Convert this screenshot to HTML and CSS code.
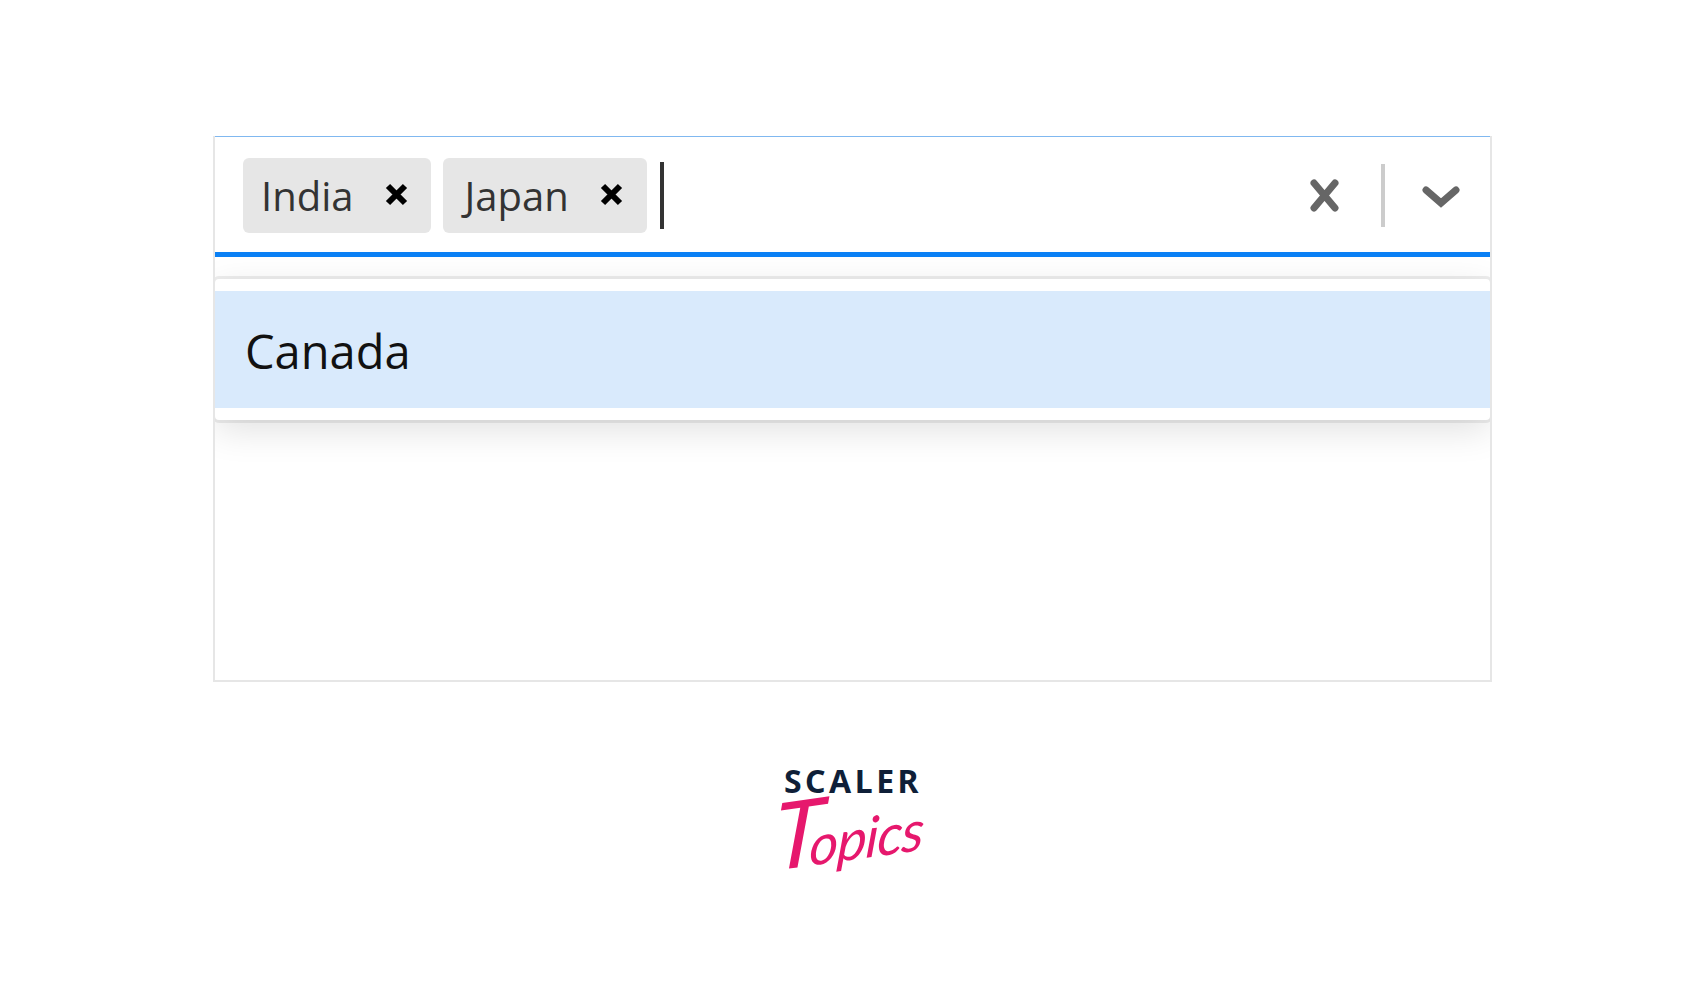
FILE: index.html
```html
<!DOCTYPE html>
<html lang="en">
<head>
<meta charset="UTF-8">
<meta name="viewport" content="width=device-width, initial-scale=1.0">
<title>Multi Select</title>
<link rel="stylesheet" href="styles.css">
</head>
<body>
<div class="frame">
  <div class="select">
    <div class="chip">
      <span class="chip-label">India</span>
      <svg class="chip-remove" viewBox="0 0 23 23"><path d="M3 3 L20 20 M20 3 L3 20"/></svg>
    </div>
    <div class="chip chip-wide">
      <span class="chip-label">Japan</span>
      <svg class="chip-remove" viewBox="0 0 23 23"><path d="M3 3 L20 20 M20 3 L3 20"/></svg>
    </div>
    <div class="caret"></div>
    <svg class="clear" viewBox="0 0 29 33"><path d="M4 4 L25 29 M25 4 L4 29"/></svg>
    <div class="separator"></div>
    <svg class="chevron" viewBox="0 0 38 22"><path d="M4 4 L19 17 L34 4"/></svg>
  </div>
  <div class="menu">
    <div class="option">Canada</div>
  </div>
</div>
<div class="logo">
  <span class="logo-top">SCALER</span>
  <span class="logo-script"><span class="logo-cap">T</span>opics</span>
</div>
</body>
</html>
```

FILE: styles.css
```css
html, body {
  margin: 0;
  background-color: #fff;
  font-family: "Open Sans", "Noto Sans", sans-serif;
}
.frame {
  box-sizing: border-box;
  height: 546px;
  margin: 136px 214px 0 213px;
  border: 2px solid #e6e6e6;
  border-top: none;
  overflow: hidden;
}
.select {
  box-sizing: border-box;
  height: 121px;
  display: flex;
  align-items: center;
  padding: 2px 0 0 28px;
  background-color: #fff;
  border-top: 1px solid #80b8f0;
  border-bottom: 5px solid #0a80f5;
  position: relative;
  z-index: 1;
}
.chip {
  box-sizing: border-box;
  height: 75px;
  display: flex;
  align-items: center;
  margin-right: 12px;
  padding: 0 23px 0 18px;
  background-color: #e6e6e6;
  border-radius: 6px;
}
.chip-wide {
  padding-left: 22px;
  padding-right: 24px;
}
.chip-label {
  font-size: 40px;
  color: #333;
  margin-right: 31px;
}
.chip-remove {
  width: 23px;
  height: 23px;
  margin-top: -2px;
}
.chip-remove path {
  fill: none;
  stroke: #000;
  stroke-width: 6;
}
.caret {
  width: 4px;
  height: 67px;
  margin-left: 1px;
  background-color: #333;
}
.clear {
  width: 29px;
  height: 33px;
  margin-left: auto;
  margin-right: 42px;
  margin-top: -1px;
}
.clear path {
  fill: none;
  stroke: #666;
  stroke-width: 7;
  stroke-linecap: round;
}
.separator {
  width: 4px;
  height: 63px;
  background-color: #ccc;
  margin-right: 37px;
}
.chevron {
  width: 38px;
  height: 22px;
  margin-right: 30px;
  margin-top: 2px;
}
.chevron path {
  fill: none;
  stroke: #666;
  stroke-width: 7;
  stroke-linecap: round;
}
.menu {
  margin-top: 22px;
  padding: 12px 0;
  background-color: #fff;
  border-radius: 4px;
  box-shadow: 0 0 0 3px rgba(0, 0, 0, 0.07), 0 10px 36px rgba(0, 0, 0, 0.12);
}
.option {
  box-sizing: border-box;
  height: 117px;
  display: flex;
  align-items: center;
  padding: 3px 0 0 30px;
  background-color: #d9eafc;
  color: #111;
  font-size: 47px;
}
.logo {
  display: flex;
  flex-direction: column;
  align-items: center;
  margin-top: 85px;
}
.logo-top {
  font-family: "Noto Sans", sans-serif;
  font-size: 32px;
  font-weight: 700;
  line-height: 28px;
  letter-spacing: 3.5px;
  color: #0f1f38;
}
.logo-script {
  margin-top: -8px;
  margin-right: 8px;
  font-family: "Lato", sans-serif;
  font-style: italic;
  font-size: 56px;
  line-height: 76px;
  letter-spacing: -1px;
  color: #e6186d;
  transform: rotate(-8deg) skewX(-12deg);
}
.logo-cap {
  font-size: 92px;
  line-height: 76px;
  margin-right: -12px;
}
```
